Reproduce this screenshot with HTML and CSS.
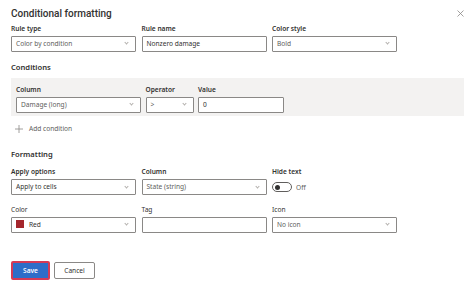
FILE: index.html
```html
<!DOCTYPE html>
<html lang="en">
<head>
    <meta charset="UTF-8" />
    <title>Conditional formatting</title>
    <link rel="stylesheet" href="styles.css">
</head>
<body>
<div class="panel">
    <header class="panel-head">
        <h1>Conditional formatting</h1>
        <svg class="close" width="7" height="7" viewBox="0 0 7 7">
            <path d="M0.5 0.5 L6.5 6.5 M6.5 0.5 L0.5 6.5" stroke="#8a8886" stroke-width="0.8" fill="none" />
        </svg>
    </header>

    <div class="row">
        <div class="field">
            <label>Rule type</label>
            <div class="select muted">Color by condition<span class="chev"></span></div>
        </div>
        <div class="field">
            <label>Rule name</label>
            <div class="input">Nonzero damage</div>
        </div>
        <div class="field">
            <label>Color style</label>
            <div class="select muted">Bold<span class="chev"></span></div>
        </div>
    </div>

    <h2>Conditions</h2>
    <div class="conditions">
        <div class="field col-column">
            <label>Column</label>
            <div class="select muted">Damage (long)<span class="chev"></span></div>
        </div>
        <div class="field col-op">
            <label>Operator</label>
            <div class="select muted">&gt;<span class="chev"></span></div>
        </div>
        <div class="field col-value">
            <label>Value</label>
            <div class="input">0</div>
        </div>
    </div>
    <div class="add-condition">
        <svg class="plus" width="8" height="8" viewBox="0 0 8 8">
            <path d="M4 0 V8 M0 4 H8" stroke="#8a8886" stroke-width="0.8" fill="none" />
        </svg>
        Add condition
    </div>

    <h2 class="formatting">Formatting</h2>
    <div class="row row-apply">
        <div class="field">
            <label>Apply options</label>
            <div class="select">Apply to cells<span class="chev"></span></div>
        </div>
        <div class="field">
            <label>Column</label>
            <div class="select muted">State (string)<span class="chev"></span></div>
        </div>
        <div class="field">
            <label>Hide text</label>
            <div class="toggle-line"><span class="toggle"><span class="knob"></span></span>Off</div>
        </div>
    </div>
    <div class="row row-second">
        <div class="field">
            <label class="light">Color</label>
            <div class="select"><span class="swatch"></span>Red<span class="chev"></span></div>
        </div>
        <div class="field">
            <label class="light">Tag</label>
            <div class="input"></div>
        </div>
        <div class="field">
            <label class="light">Icon</label>
            <div class="select muted">No icon<span class="chev"></span></div>
        </div>
    </div>

    <div class="actions">
        <button class="btn save">Save</button>
        <button class="btn cancel">Cancel</button>
    </div>
</div>
</body>
</html>
```

FILE: styles.css
```css
* {
    box-sizing: border-box;
    margin: 0;
    padding: 0;
}

body {
    font-family: 'Noto Sans', 'Open Sans', sans-serif;
    background: #fff;
    color: #323130;
    width: 474px;
    height: 284px;
    overflow: hidden;
}

.panel {
    padding: 5px 10px 0 11px;
}

/* En-tête */
.panel-head {
    display: flex;
    justify-content: space-between;
    align-items: center;
    height: 16px;
}

.panel-head h1 {
    font-family: 'Roboto', 'Noto Sans', sans-serif;
    font-size: 10px;
    font-weight: 500;
}

.close {
    margin-right: 0;
}

/* Lignes de champs */
.row {
    display: grid;
    grid-template-columns: 125px 125px 125px;
    column-gap: 5.5px;
    margin-top: 1.5px;
}

.row-apply {
    margin-top: 6.5px;
}

.row-second {
    margin-top: 8.5px;
}

.field label {
    display: block;
    font-size: 6.6px;
    font-weight: 600;
    line-height: 11px;
    height: 13px;
}

.field label.light {
    font-weight: 400;
}

.select, .input {
    position: relative;
    height: 16px;
    border: 1px solid #8a8886;
    border-radius: 1px;
    font-size: 6.6px;
    line-height: 14px;
    padding-left: 4px;
    color: #323130;
    background: #fff;
    white-space: nowrap;
}

.select.muted {
    color: #605e5c;
}

.chev {
    position: absolute;
    right: 7px;
    top: 4.5px;
    width: 3px;
    height: 3px;
    border-right: 0.8px solid #b3b0ad;
    border-bottom: 0.8px solid #b3b0ad;
    transform: rotate(45deg);
}

h2 {
    font-size: 7.6px;
    font-weight: 600;
    margin-top: 9px;
    line-height: 12px;
}

h2.formatting {
    margin-top: 13px;
}

/* Zone des conditions */
.conditions {
    display: flex;
    gap: 4.5px;
    background: #f3f2f1;
    margin-top: 5px;
    padding: 6px 5px 0 5px;
    height: 38px;
}

.col-column { width: 125px; }
.col-op { width: 48px; }
.col-value { width: 86px; }

.add-condition {
    display: flex;
    align-items: center;
    font-size: 6.6px;
    color: #605e5c;
    margin-top: 7px;
    height: 12px;
    padding-left: 4px;
}

.plus {
    margin-right: 6px;
}

/* Interrupteur */
.toggle-line {
    display: flex;
    align-items: center;
    height: 16px;
    font-size: 6.6px;
    color: #605e5c;
}

.toggle {
    position: relative;
    width: 20px;
    height: 10px;
    border: 0.8px solid #605e5c;
    border-radius: 6px;
    margin-right: 4px;
}

.knob {
    position: absolute;
    left: 2px;
    top: 2px;
    width: 5px;
    height: 5px;
    border-radius: 50%;
    background: #323130;
}

.swatch {
    display: inline-block;
    width: 8px;
    height: 8px;
    background: #a4262c;
    vertical-align: middle;
    margin-right: 5px;
    margin-top: -2px;
}

/* Boutons */
.actions {
    display: flex;
    align-items: center;
    gap: 4px;
    margin-top: 28.5px;
}

.btn {
    font-family: inherit;
    font-size: 6.6px;
    font-weight: 600;
    border-radius: 2px;
    cursor: pointer;
}

.save {
    width: 39px;
    height: 18.5px;
    background: #2e6dc8;
    color: #fff;
    border: 2px solid #d63a56;
}

.cancel {
    width: 41px;
    height: 16.5px;
    background: #fff;
    color: #323130;
    border: 1px solid #8a8886;
    font-weight: 400;
}
```
